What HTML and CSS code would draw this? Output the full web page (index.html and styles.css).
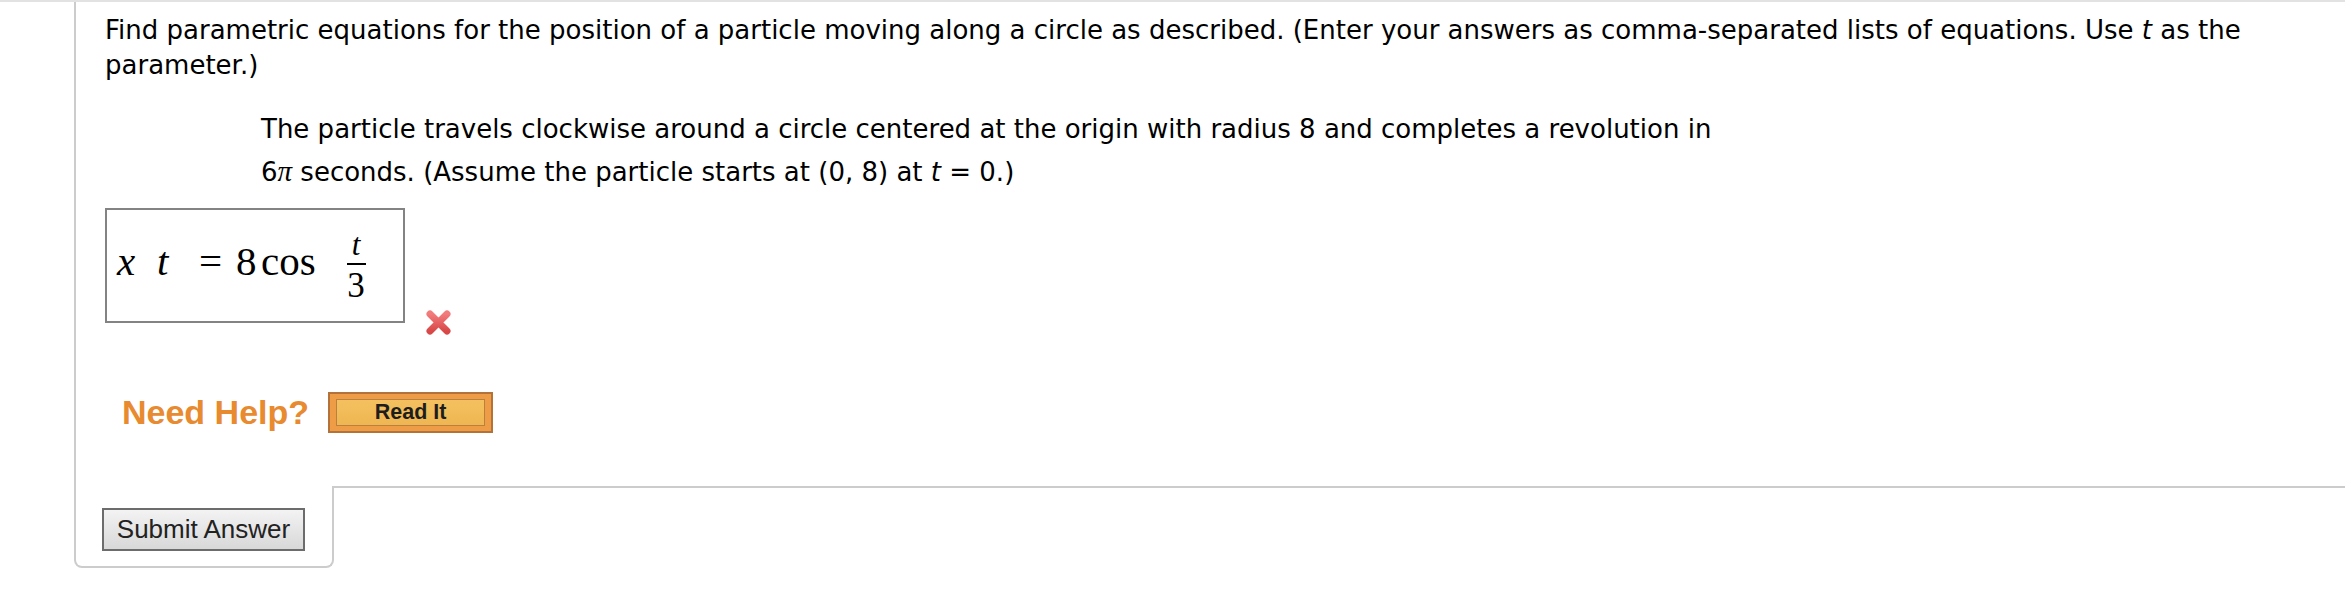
FILE: index.html
```html
<!DOCTYPE html>
<html lang="en">
<head>
<meta charset="utf-8">
<title>Question</title>
<link rel="stylesheet" href="styles.css">
</head>
<body>
<div class="topline"></div>
<div class="wrap">
  <div class="panel">
    <p class="q"><span class="ln">Find parametric equations for the position of a particle moving along a circle as described. (Enter your answers as comma-separated lists of equations. Use <i>t</i> as the</span> <span class="ln">parameter.)</span></p>
    <p class="desc"><span class="ln">The particle travels clockwise around a circle centered at the origin with radius 8 and completes a revolution in</span> <span class="ln">6<i class="pi">π</i> seconds. (Assume the particle starts at (0, 8) at <i>t</i> = 0.)</span></p>
    <div class="answer-row">
      <div class="answer-box">
        <span class="tok tok-x"><i>x</i></span>
        <span class="tok tok-t"><i>t</i></span>
        <span class="tok tok-eq">=</span>
        <span class="tok tok-8">8</span>
        <span class="tok tok-cos">cos</span>
        <span class="frac">
          <span class="num"><i>t</i></span>
          <span class="bar"></span>
          <span class="den">3</span>
        </span>
      </div>
      <svg class="wrong" width="27" height="27" viewBox="0 0 27 27" aria-label="incorrect">
        <defs>
          <linearGradient id="xg" x1="0" y1="0" x2="0" y2="1">
            <stop offset="0" stop-color="#f27b7b"/>
            <stop offset="1" stop-color="#d84848"/>
          </linearGradient>
        </defs>
        <path d="M5 5 L22 22 M22 5 L5 22" stroke="url(#xg)" stroke-width="7" stroke-linecap="round" fill="none"/>
      </svg>
    </div>
    <div class="help-row">
      <span class="need">Need Help?</span>
      <button class="read" type="button"><span class="read-inner">Read It</span></button>
    </div>
  </div>
  <div class="tab">
    <button class="submit" type="button">Submit Answer</button>
  </div>
</div>
</body>
</html>
```
FILE: styles.css
```css
html, body {
  margin: 0;
  padding: 0;
  background: #ffffff;
  overflow: hidden;
}
body {
  font-family: "DejaVu Sans", Verdana, sans-serif;
  color: #000;
}
.topline {
  height: 2px;
  background: #e2e2e2;
}
.wrap {
  margin-left: 74px;
  width: 2400px;
}
.panel {
  border-left: 2px solid #cccccc;
  border-bottom: 2px solid #cccccc;
  padding: 11px 0 53px 29px;
}
.q {
  margin: 0;
  font-size: 26px;
  line-height: 35px;
  max-width: 2225px;
}
.desc {
  margin: 25px 0 0 156px;
  font-size: 26px;
  line-height: 42px;
  max-width: 1470px;
}
.ln {
  display: block;
  white-space: nowrap;
}
.pi {
  font-family: "Liberation Serif", "Times New Roman", serif;
  font-size: 29px;
}
.answer-row {
  display: flex;
  align-items: flex-end;
  margin-top: 15px;
}
.answer-box {
  box-sizing: border-box;
  width: 300px;
  height: 115px;
  border: 2px solid #838383;
  display: flex;
  align-items: center;
  padding: 0 0 8px 10px;
  font-family: "Liberation Serif", "Times New Roman", serif;
  font-size: 41px;
  line-height: 1;
}
.tok {
  display: inline-block;
}
.tok-x { width: 40px; }
.tok-t { width: 42px; }
.tok-eq { width: 37px; }
.tok-8 { width: 25px; }
.tok-cos { width: 85px; }
.frac {
  display: inline-flex;
  flex-direction: column;
  align-items: center;
  width: 20px;
  margin-top: 9px;
}
.num {
  font-size: 31px;
  line-height: 1;
}
.bar {
  width: 19px;
  height: 2px;
  background: #000;
  margin: 3px 0 3px;
}
.den {
  font-size: 35px;
  line-height: 1;
}
.wrong {
  margin-left: 20px;
  margin-bottom: -13px;
}
.help-row {
  display: flex;
  align-items: center;
  margin-top: 69px;
  padding-left: 17px;
}
.need {
  font-family: "Liberation Sans", Arial, sans-serif;
  font-weight: bold;
  font-size: 34px;
  color: #e88a2f;
  margin-right: 19px;
}
.read {
  box-sizing: border-box;
  width: 165px;
  height: 41px;
  padding: 5px 6px;
  border: 2px solid #b27239;
  background: #ee9c45;
  display: flex;
  cursor: pointer;
}
.read-inner {
  flex: 1;
  display: flex;
  align-items: center;
  justify-content: center;
  border: 1px solid #b9803f;
  background: linear-gradient(#f4c160, #efb652);
  font-family: "Liberation Sans", Arial, sans-serif;
  font-weight: bold;
  font-size: 21.5px;
  color: #1d1d1d;
}
.tab {
  box-sizing: border-box;
  width: 260px;
  margin-top: -2px;
  background: #ffffff;
  border-left: 2px solid #cccccc;
  border-right: 2px solid #cccccc;
  border-bottom: 2px solid #cccccc;
  border-radius: 0 0 8px 8px;
  padding: 22px 0 15px 26px;
}
.submit {
  box-sizing: border-box;
  width: 203px;
  height: 43px;
  border: 2px solid #6c6c6c;
  background: linear-gradient(#f3f3f3, #d8d8d8);
  font-family: "Liberation Sans", Arial, sans-serif;
  font-size: 26px;
  color: #222;
  padding: 0;
  cursor: pointer;
}
```
